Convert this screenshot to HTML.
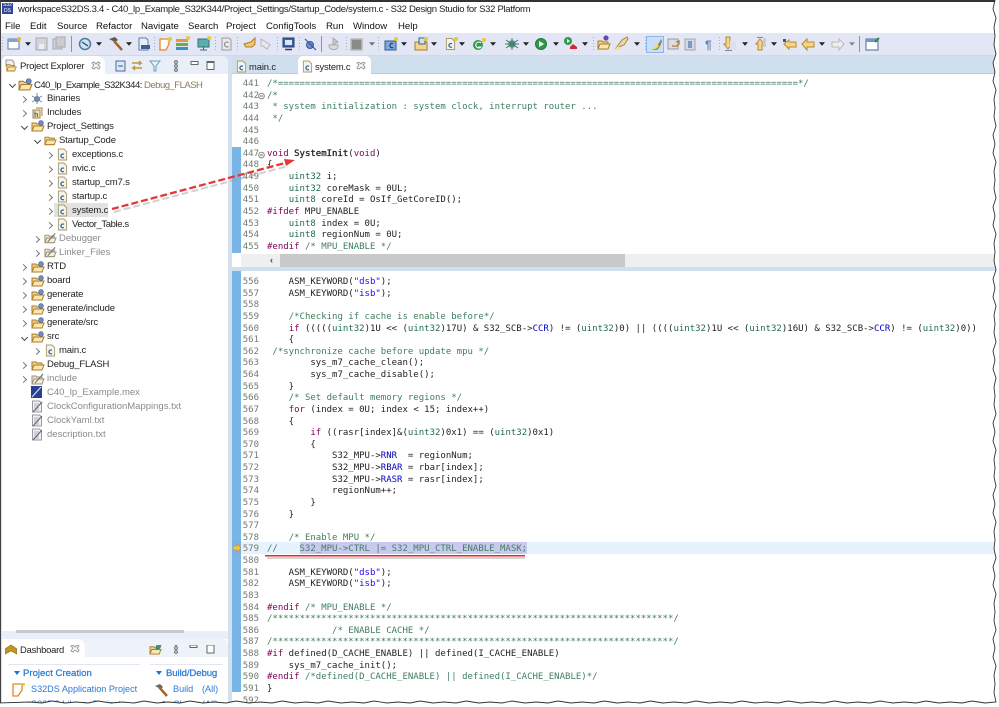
<!DOCTYPE html>
<html><head><meta charset="utf-8"><style>
html,body{margin:0;padding:0;background:#fff}
#r{position:relative;width:999px;height:707px;overflow:hidden;background:#fff;font-family:"Liberation Sans",sans-serif;font-size:10px;color:#222}
#r div,#r pre,#r svg{position:absolute}
.a{position:absolute;white-space:nowrap}
.m{top:21px;font-size:9.6px;color:#111}
pre{margin:0;font-family:"DejaVu Sans Mono",monospace;font-size:9px;line-height:11.63px;color:#222;filter:blur(.25px)}
.n{color:#6f7b70;text-align:right;left:236px;width:23px}
i{font-style:normal;color:#3f7f5f}b{font-weight:normal;color:#7f0055}
u{text-decoration:none;color:#1f6a55}s{text-decoration:none;color:#2a00ff}em{font-style:normal;color:#0000c0}
.t{left:0;white-space:nowrap;font-size:9.5px;letter-spacing:-.15px;color:#222;line-height:14px;height:14px;margin-top:1px}
.g{color:#8a8a8a;letter-spacing:0}
.ch{width:4px;height:4px;border-right:1px solid #777;border-bottom:1px solid #777;transform:rotate(-45deg);margin-top:1px}
.op{width:4px;height:4px;border-right:1px solid #444;border-bottom:1px solid #444;transform:rotate(45deg);margin-top:1px}
.l{font-size:9.1px;color:#2a7ad8}
</style></head><body><div id="r">
<svg width="0" height="0" style="position:absolute"><defs>
<symbol id="file" viewBox="0 0 12 13"><path d="M1.5.5h6l3 3v9h-9z" fill="#f6f3e8" stroke="#a89a70"/><path d="M7.5 6.4a2 2 0 1 0 0 3.2" fill="none" stroke="#2a62a8" stroke-width="1.3"/></symbol>
<symbol id="fold" viewBox="0 0 14 12"><path d="M1 3h4l1 1h5v7H1z" fill="#f3d489" stroke="#a97c2c"/><path d="M1 11l2-5h10l-2 5z" fill="#fbe6ad" stroke="#a97c2c"/><circle cx="10" cy="3" r="2.4" fill="#6f8dc0" stroke="#3f5f92" stroke-width=".6"/></symbol>
<symbol id="fold2" viewBox="0 0 14 12"><path d="M1 3h4l1 1h5v7H1z" fill="#f3d489" stroke="#a97c2c"/><path d="M1 11l2-5h10l-2 5z" fill="#fbe6ad" stroke="#a97c2c"/></symbol>
<symbol id="foldg" viewBox="0 0 14 12"><path d="M1 3h4l1 1h5v7H1z" fill="#efe4c8" stroke="#9a8f78"/><path d="M1 11l2-5h10l-2 5z" fill="#f6efd9" stroke="#9a8f78"/><path d="M4 10L12 1" stroke="#777" stroke-width="1.2"/></symbol>
<symbol id="txt" viewBox="0 0 12 13"><path d="M1.5 1h7l2 2v9h-9z" fill="#f0f0f0" stroke="#9a9aa5"/><path d="M3 4h5M3 6h5M3 8h5M3 10h5" stroke="#b5b5bd"/><path d="M2 12L11 2" stroke="#6a6a78" stroke-width="1.2"/></symbol>
<symbol id="dd" viewBox="0 0 7 4"><path d="M0 0h7L3.500 4z"/></symbol>
</defs></svg>

<!-- frame backgrounds -->
<div style="left:0;top:0;width:999px;height:2px;background:#333"></div>
<div style="left:0;top:0;width:1px;height:707px;background:#444"></div>
<div style="left:1px;top:33px;width:998px;height:23px;background:#e2e6f5;border-bottom:1px solid #d5d8e4;box-sizing:border-box"></div>
<div style="left:1px;top:56px;width:998px;height:650px;background:#d3e1ef"></div>

<!-- title -->
<div style="left:2px;top:3px;width:11px;height:11px;background:#2f4a9a;color:#fff;font-size:5px;line-height:5.5px;text-align:center">S32<br>DS</div>
<span class="a" style="left:18px;top:4px;font-size:9.5px;letter-spacing:-.3px;color:#222">workspaceS32DS.3.4 - C40_lp_Example_S32K344/Project_Settings/Startup_Code/system.c - S32 Design Studio for S32 Platform</span>
<span class="a m" style="left:5px">File</span><span class="a m" style="left:30px">Edit</span><span class="a m" style="left:57px">Source</span><span class="a m" style="left:96px">Refactor</span><span class="a m" style="left:141px">Navigate</span><span class="a m" style="left:188px">Search</span><span class="a m" style="left:226px">Project</span><span class="a m" style="left:266px">ConfigTools</span><span class="a m" style="left:326px">Run</span><span class="a m" style="left:353px">Window</span><span class="a m" style="left:398px">Help</span>

<!-- toolbar -->
<svg style="left:0;top:33px" width="999" height="23" viewBox="0 33 999 23">
<g fill="#222">
<use href="#dd" x="25" y="42" width="6" height="4"/><use href="#dd" x="96" y="42" width="6" height="4"/><use href="#dd" x="126" y="42" width="6" height="4"/><use href="#dd" x="369" y="42" width="6" height="4" fill="#777"/><use href="#dd" x="401" y="42" width="6" height="4"/><use href="#dd" x="431" y="42" width="6" height="4"/><use href="#dd" x="459" y="42" width="6" height="4"/><use href="#dd" x="490" y="42" width="6" height="4"/><use href="#dd" x="523" y="42" width="6" height="4"/><use href="#dd" x="553" y="42" width="6" height="4"/><use href="#dd" x="582" y="42" width="6" height="4"/><use href="#dd" x="634" y="42" width="6" height="4"/><use href="#dd" x="742" y="42" width="6" height="4"/><use href="#dd" x="771" y="42" width="6" height="4"/><use href="#dd" x="819" y="42" width="6" height="4"/><use href="#dd" x="849" y="42" width="6" height="4" fill="#888"/>
</g>
<g stroke="#a9acb8" stroke-dasharray="1 2"><path d="M2.500 37v14M154.500 37v14M215.500 37v14M237.500 37v14M277.500 37v14M299.500 37v14M346.500 37v14M378.500 37v14M593.500 37v14M645.500 37v14M719.500 37v14"/></g>
<path d="M71.500 36v16M321.500 36v16M859.500 36v16" stroke="#8f929c"/>
<!-- new window --><rect x="8" y="39" width="11" height="10" fill="#fff" stroke="#5a7aa5"/><rect x="8" y="39" width="11" height="3" fill="#7fa5d0"/><circle cx="19" cy="39" r="2" fill="#e8b93a"/>
<!-- save -->
<path d="M36 38h11v12H36z" fill="#d4d4d8" stroke="#a8a8ae"/><rect x="39" y="44" width="5" height="5" fill="#eee"/>
<path d="M53 39h9v10h-9z" fill="#d4d4d8" stroke="#a8a8ae"/><path d="M56 37h9v10h-9z" fill="#ccc" stroke="#a8a8ae"/>
<!-- gear --><circle cx="85" cy="44" r="5.500" fill="#cfe0f0" stroke="#4a7aa5" stroke-width="1.500"/><path d="M82 42l6 4" stroke="#345" stroke-width="1.200"/>
<!-- hammer --><path d="M109 39l6-2 3 3-3 2z" fill="#5a5a5a"/><path d="M114 41l8 9" stroke="#a5642a" stroke-width="2.500"/>
<!-- s32 --><path d="M139 38h7l2 2v10h-9z" fill="#e8eef6" stroke="#5f7ea5"/><rect x="141" y="45" width="9" height="4" fill="#3f5f92"/>
<!-- new orange --><path d="M160 39h9v5l-3 6h-6z" fill="#fff" stroke="#e8862a" stroke-width="1.300"/><circle cx="170" cy="39" r="2" fill="#e8c83a"/>
<!-- layers --><rect x="176" y="39" width="12" height="3" fill="#e8963a"/><rect x="176" y="43" width="12" height="3" fill="#6ab04a"/><rect x="176" y="47" width="12" height="3" fill="#3a8fd0"/><circle cx="188" cy="38" r="2" fill="#e8c83a"/>
<!-- monitor --><rect x="198" y="39" width="11" height="8" fill="#5ab0a8" stroke="#3a6a80"/><path d="M203.500 47v3M200 50h7" stroke="#3a6a80"/><circle cx="209" cy="38" r="2" fill="#e8c83a"/>
<!-- c gray --><path d="M222 38h7l2 2v10h-9z" fill="#e8e8ea" stroke="#9a9aa2"/><path d="M228.500 42.500a2.500 2.500 0 1 0 0 4" fill="none" stroke="#888" stroke-width="1.100"/>
<!-- undo arrows --><path d="M244 44l7-2 4-4v6l-3 3h-6z" fill="#f2c879" stroke="#b47c22"/><path d="M261 39l5 3 4 3-3 4-4-3h-2z" fill="#e8e8ea" stroke="#b5b5bb"/>
<!-- console --><rect x="283" y="38" width="11" height="9" fill="#3a62a8" stroke="#1f3f78"/><rect x="285" y="40" width="7" height="5" fill="#dce8f6"/><path d="M285 49.500h7" stroke="#1f3f78" stroke-width="1.500"/>
<!-- cross --><circle cx="310" cy="45" r="3.500" fill="#6a92c8" stroke="#2f5a98"/><path d="M305 39l11 11" stroke="#2f5a98" stroke-width="1.200"/>
<!-- run gray --><path d="M329 46c0 4 7 5 9 1v-2h-9z" fill="#ddd" stroke="#aaa"/><path d="M333 38l5 4-5 3z" fill="#c8c8c8" stroke="#aaa"/>
<!-- chip --><rect x="351" y="39" width="11" height="11" fill="#8a8a8a" stroke="#bbb" stroke-width="1.500"/>
<!-- c cube --><path d="M385 41h11v9h-11z" fill="#7fa8d8" stroke="#2f5a98"/><path d="M393 43.500a2.200 2.200 0 1 0 0 4" fill="none" stroke="#17396e" stroke-width="1.100"/><circle cx="396" cy="39" r="2" fill="#e8c83a"/>
<path d="M415 42h12v8h-12z" fill="#f3d489" stroke="#a97c2c"/><rect x="419" y="38" width="6" height="6" fill="#cfe0f0" stroke="#3f5f92"/><circle cx="426" cy="39" r="2" fill="#e8c83a"/>
<use href="#file" x="445" y="38" width="11" height="12"/><circle cx="456" cy="39" r="2" fill="#e8c83a"/>
<circle cx="478" cy="45" r="5" fill="#2e9a4a"/><path d="M481 43a3 3 0 1 0 0 4h-3" fill="none" stroke="#fff" stroke-width="1.100"/><circle cx="484" cy="40" r="2" fill="#e8c83a"/>
<!-- bug --><circle cx="512" cy="44" r="3.800" fill="#4a9a7a"/><path d="M506 40l12 8M506 48l12-8M505 44h14M512 38v12" stroke="#4a7a70"/>
<!-- play --><circle cx="541" cy="44" r="5.500" fill="#2e9a4a" stroke="#1e7a36"/><path d="M539 41l5 3-5 3z" fill="#fff"/>
<!-- ext --><circle cx="568" cy="41" r="4" fill="#2e9a4a"/><path d="M567 39l3 2-3 2z" fill="#fff"/><path d="M570 47l3-3 4 3v2h-7z" fill="#d02a2a"/>
<!-- folder --><use href="#fold2" x="597" y="38" width="14" height="12"/><circle cx="606" cy="38" r="2.600" fill="#6a4aa5"/>
<!-- brush --><path d="M616 48l6-8 5-3 1 2-4 6z" fill="#e8d8a8" stroke="#a98a3a"/><path d="M614 50l4-4 2 2-2 2z" fill="#f4e28a"/>
<!-- highlighted --><rect x="646.500" y="36.500" width="17" height="16" fill="#c8dff6" stroke="#88b8e8"/><path d="M650 50c3 0 7-2 11-11l1 2c-2 6-4 9-6 9z" fill="#8a7f6a"/><path d="M650 50c3-1 5-3 7-6l2 2c-2 3-5 4-9 4z" fill="#f2df4a"/>
<!-- ops --><rect x="668" y="39" width="10" height="10" fill="#dcdce4" stroke="#9a9aa8"/><path d="M672 46h5l2-2v-3l-3 1" fill="none" stroke="#b57c22" stroke-width="1.300"/>
<rect x="685" y="39" width="10" height="11" fill="#d4d8e4" stroke="#a4a8b5"/><rect x="688" y="41" width="4" height="7" fill="#7f9ac0"/>
<!-- down/up --><path d="M726 37h4v7h2l-4 5-4-5h2z" fill="#f5d58a" stroke="#b98a2a"/><rect x="730" y="41" width="6" height="9" fill="#dde0ea"/><rect x="725" y="50" width="7" height="1" fill="#6a8ab5"/>
<path d="M758 50h4v-6h2l-4-5-4 5h2z" fill="#f5d58a" stroke="#b98a2a"/><rect x="763" y="38" width="3" height="9" fill="#c8ccd8"/><rect x="757" y="37" width="6" height="1" fill="#6a8ab5"/>
<path d="M784 44l5-4v2h7v5h-7v2z" fill="#f5d58a" stroke="#b98a2a"/><rect x="783" y="39" width="3" height="3" fill="#345a90"/>
<path d="M802 44l5-5v3h7v5h-7v3z" fill="#f5d58a" stroke="#b98a2a"/>
<path d="M844 44l-5-5v3h-7v5h7v3z" fill="#eee" stroke="#bbb"/>
<!-- maximise --><rect x="866" y="39" width="12" height="11" fill="#fff" stroke="#4a6a90"/><rect x="866" y="39" width="12" height="3" fill="#6f9ac8"/><path d="M875 42l4-4" stroke="#2e8a3a" stroke-width="2"/>
</svg>
<span class="a" style="left:705px;top:38px;font-size:12px;font-weight:bold;color:#5f82b5">¶</span>

<!-- left panel -->
<div style="left:2px;top:74px;width:226px;height:557px;background:#fff"></div>
<div style="left:2px;top:56px;width:226px;height:18px;background:#e8eff8;border-radius:5px 5px 0 0"></div>
<div style="left:2px;top:56px;width:103px;height:18px;background:#fff;border-radius:5px 8px 0 0"></div>
<svg style="left:5px;top:59px" width="13" height="13"><path d="M1 1h6l2 2v4H1z" fill="#eee" stroke="#999"/><use href="#fold2" x="1" y="3" width="11" height="10"/></svg>
<span class="a" style="left:20px;top:61px;font-size:9.6px;letter-spacing:-.25px;color:#222">Project Explorer</span>
<svg style="left:88px;top:60px" width="135" height="14" fill="none"><path d="M4 3l2-1 2 2 2-2 2 1-2 2 2 2-1 2-3-2-2 2-2-1 2-3z" stroke="#9a9a9a"/>
<rect x="28" y="1" width="9" height="10" stroke="#4a6a9a" fill="#dde8f5"/><path d="M30 6h5" stroke="#345a90"/>
<path d="M44 3h9l-2-2M53 3l-2 2M54 8h-9l2 2M45 8l2-2" stroke="#c49632" stroke-width="1.400"/>
<path d="M62 1h10l-4 5v5h-2V6z" stroke="#6f9ac0" fill="#e8f0f8"/>
<circle cx="88" cy="2" r="1.400" stroke="#666"/><circle cx="88" cy="6" r="1.400" stroke="#666"/><circle cx="88" cy="10" r="1.400" stroke="#666"/>
<rect x="103" y="1.500" width="7" height="3" stroke="#666" fill="#fff"/><rect x="119" y="1.500" width="7" height="8" stroke="#666" fill="#fff"/><path d="M119 2.500h7" stroke="#666"/></svg>

<!-- tree -->
<div class="op" style="left:10px;top:81px"></div>
<svg style="left:18px;top:78px" width="15" height="13"><use href="#fold" width="15" height="13"/></svg>
<span class="a t" style="left:34px;top:78px;letter-spacing:-.5px"><span style="color:#222">C40_lp_Example_S32K344:</span> <span style="color:#8a7c55">Debug_FLASH</span></span>

<div class="ch" style="left:21px;top:96px"></div><svg style="left:31px;top:92px" width="13" height="13"><circle cx="6" cy="7" r="3" fill="#5a7fa8"/><path d="M1 4l10 6M1 10l10-6M6 1v11" stroke="#7a8fa5"/></svg><span class="a t" style="left:47px;top:91px">Binaries</span>
<div class="ch" style="left:21px;top:110px"></div><svg style="left:31px;top:106px" width="13" height="13"><path d="M2 4h7v8H2z" fill="#f5e3b0" stroke="#a08040"/><path d="M5 2h6v8" fill="none" stroke="#a08040"/><text x="3" y="11" font-size="7" font-weight="bold" fill="#345a90" font-family="Liberation Sans">h</text></svg><span class="a t" style="left:47px;top:105px">Includes</span>
<div class="op" style="left:22px;top:123px"></div><svg style="left:31px;top:120px" width="14" height="12"><use href="#fold" width="14" height="12"/></svg><span class="a t" style="left:47px;top:119px">Project_Settings</span>
<div class="op" style="left:35px;top:137px"></div><svg style="left:44px;top:134px" width="13" height="12"><use href="#fold2" width="13" height="12"/></svg><span class="a t" style="left:59px;top:133px">Startup_Code</span>

<div style="left:54px;top:203px;width:54px;height:14px;background:#e2e2e2"></div>
<div class="ch" style="left:47px;top:152px"></div><svg style="left:57px;top:148px" width="11" height="13"><use href="#file" width="11" height="13"/></svg><span class="a t" style="left:72px;top:147px">exceptions.c</span>
<div class="ch" style="left:47px;top:166px"></div><svg style="left:57px;top:162px" width="11" height="13"><use href="#file" width="11" height="13"/></svg><span class="a t" style="left:72px;top:161px">nvic.c</span>
<div class="ch" style="left:47px;top:180px"></div><svg style="left:57px;top:176px" width="11" height="13"><use href="#file" width="11" height="13"/></svg><span class="a t" style="left:72px;top:175px">startup_cm7.s</span>
<div class="ch" style="left:47px;top:194px"></div><svg style="left:57px;top:190px" width="11" height="13"><use href="#file" width="11" height="13"/></svg><span class="a t" style="left:72px;top:189px">startup.c</span>
<div class="ch" style="left:47px;top:208px"></div><svg style="left:57px;top:204px" width="11" height="13"><use href="#file" width="11" height="13"/></svg><span class="a t" style="left:72px;top:203px">system.c</span>
<div class="ch" style="left:47px;top:222px"></div><svg style="left:57px;top:218px" width="11" height="13"><use href="#file" width="11" height="13"/></svg><span class="a t" style="left:72px;top:217px;letter-spacing:-.4px">Vector_Table.s</span>
<div class="ch" style="left:34px;top:236px"></div><svg style="left:44px;top:232px" width="13" height="12"><use href="#foldg" width="13" height="12"/></svg><span class="a t g" style="left:59px;top:231px">Debugger</span>
<div class="ch" style="left:34px;top:250px"></div><svg style="left:44px;top:246px" width="13" height="12"><use href="#foldg" width="13" height="12"/></svg><span class="a t g" style="left:59px;top:245px">Linker_Files</span>

<div class="ch" style="left:21px;top:264px"></div><svg style="left:31px;top:261px" width="14" height="12"><use href="#fold" width="14" height="12"/></svg><span class="a t" style="left:47px;top:259px">RTD</span>
<div class="ch" style="left:21px;top:278px"></div><svg style="left:31px;top:275px" width="14" height="12"><use href="#fold" width="14" height="12"/></svg><span class="a t" style="left:47px;top:273px">board</span>
<div class="ch" style="left:21px;top:292px"></div><svg style="left:31px;top:289px" width="14" height="12"><use href="#fold" width="14" height="12"/></svg><span class="a t" style="left:47px;top:287px">generate</span>
<div class="ch" style="left:21px;top:306px"></div><svg style="left:31px;top:303px" width="14" height="12"><use href="#fold" width="14" height="12"/></svg><span class="a t" style="left:47px;top:301px">generate/include</span>
<div class="ch" style="left:21px;top:320px"></div><svg style="left:31px;top:317px" width="14" height="12"><use href="#fold" width="14" height="12"/></svg><span class="a t" style="left:47px;top:315px">generate/src</span>
<div class="op" style="left:22px;top:334px"></div><svg style="left:31px;top:331px" width="14" height="12"><use href="#fold" width="14" height="12"/></svg><span class="a t" style="left:47px;top:329px">src</span>
<div class="ch" style="left:34px;top:348px"></div><svg style="left:45px;top:344px" width="11" height="13"><use href="#file" width="11" height="13"/></svg><span class="a t" style="left:59px;top:343px">main.c</span>
<div class="ch" style="left:21px;top:362px"></div><svg style="left:31px;top:359px" width="14" height="12"><use href="#fold2" width="14" height="12"/></svg><span class="a t" style="left:47px;top:357px">Debug_FLASH</span>
<div class="ch" style="left:21px;top:376px"></div><svg style="left:31px;top:373px" width="14" height="12"><use href="#foldg" width="14" height="12"/></svg><span class="a t g" style="left:47px;top:371px">include</span>
<svg style="left:31px;top:386px" width="12" height="13"><rect x="0" y="0" width="11" height="12" fill="#2a3f92"/><path d="M1 11L10 1" stroke="#cfe0f0" stroke-width="1.200"/></svg><span class="a t g" style="left:47px;top:385px">C40_lp_Example.mex</span>
<svg style="left:31px;top:400px" width="12" height="13"><use href="#txt" width="12" height="13"/></svg><span class="a t g" style="left:47px;top:399px">ClockConfigurationMappings.txt</span>
<svg style="left:31px;top:414px" width="12" height="13"><use href="#txt" width="12" height="13"/></svg><span class="a t g" style="left:47px;top:413px">ClockYaml.txt</span>
<svg style="left:31px;top:428px" width="12" height="13"><use href="#txt" width="12" height="13"/></svg><span class="a t g" style="left:47px;top:427px">description.txt</span>

<!-- left scrollbar stub -->
<div style="left:2px;top:631px;width:226px;height:8px;background:#e8eff8"></div>
<div style="left:16px;top:630px;width:168px;height:3px;background:#c9c9c9"></div>

<!-- dashboard -->
<div style="left:2px;top:639px;width:226px;height:68px;background:#fff"></div>
<div style="left:2px;top:639px;width:226px;height:18px;background:#eef3fa;border-radius:5px 5px 0 0"></div>
<div style="left:2px;top:639px;width:83px;height:18px;background:#fff;border-radius:5px 8px 0 0"></div>
<svg style="left:5px;top:644px" width="12" height="11"><path d="M0 10V5l6-4 6 4v5l-6-3z" fill="#c2971f" stroke="#8a6a10" stroke-width=".6"/></svg>
<span class="a" style="left:20px;top:644px;font-size:9.4px;letter-spacing:-.2px;color:#222">Dashboard</span>
<svg style="left:70px;top:645px" width="150" height="14" fill="none"><path d="M1 1l2-1 2 2 2-2 2 1-2 2 2 2-1 2-3-2-2 2-2-1 2-3z" stroke="#9a9a9a"/><use href="#fold" x="79" y="-1" width="13" height="11"/><path d="M86 4l5-4" stroke="#2e9a4a" stroke-width="2"/>
<circle cx="106" cy="-1" r="1.400" stroke="#666"/><circle cx="106" cy="3" r="1.400" stroke="#666"/><circle cx="106" cy="7" r="1.400" stroke="#666"/>
<rect x="120" y="0" width="7" height="2.500" stroke="#666" fill="#fff"/><rect x="137" y="0" width="7" height="8" stroke="#666" fill="#fff"/></svg>
<div style="left:8px;top:664px;width:132px;height:1px;background:#e3e8f0"></div><div style="left:150px;top:664px;width:73px;height:1px;background:#e3e8f0"></div>
<svg style="left:14px;top:671px" width="160" height="5" fill="#1a73d8"><path d="M0 0h6L3 4z"/><path d="M142 0h6l-3 4z"/></svg>
<span class="a" style="left:23px;top:668px;font-size:9.6px;color:#2a7ad8;-webkit-text-stroke:.25px #2a7ad8">Project Creation</span>
<span class="a" style="left:166px;top:668px;font-size:9.6px;letter-spacing:-.1px;color:#2a7ad8;-webkit-text-stroke:.25px #2a7ad8">Build/Debug</span>
<svg style="left:12px;top:683px" width="14" height="24" fill="none"><path d="M1 1h9v6l-4 6H1z" fill="#fff" stroke="#e8862a" stroke-width="1.300"/><circle cx="11" cy="1" r="2" fill="#e8c83a"/><path d="M0 20h12M0 23h12" stroke="#8ab04a" stroke-width="2"/></svg>
<span class="a l" style="left:31px;top:684px">S32DS Application Project</span>
<span class="a l" style="left:31px;top:699px">S32DS Library Project</span>
<svg style="left:154px;top:684px" width="16" height="23" fill="none"><path d="M1 2l5-2 3 3-2 2z" fill="#666"/><path d="M5 3l8 9" stroke="#a5642a" stroke-width="2.500"/><path d="M4 21l6-3 3 3" stroke="#a5642a" stroke-width="2"/></svg>
<span class="a l" style="left:173px;top:684px">Build</span><span class="a l" style="left:202px;top:684px">(All)</span>
<span class="a l" style="left:173px;top:699px">Clean</span><span class="a l" style="left:202px;top:699px">(All)</span>

<!-- editor tabs -->
<div style="left:232px;top:56px;width:767px;height:18px;background:#cfdfee;border-bottom:1px solid #b9cee2;box-sizing:border-box"></div>
<div style="left:298px;top:56px;width:73px;height:18px;background:#fff;border-radius:5px 5px 0 0"></div>
<svg style="left:236px;top:60px" width="11" height="13"><use href="#file" width="11" height="13"/></svg><span class="a" style="left:249px;top:61px;font-size:9.4px;letter-spacing:-.1px;color:#222">main.c</span>
<svg style="left:302px;top:60px" width="11" height="13"><use href="#file" width="11" height="13"/></svg><span class="a" style="left:315px;top:61px;font-size:9.4px;letter-spacing:-.2px;color:#222">system.c</span>
<svg style="left:356px;top:62px" width="11" height="10" fill="none"><path d="M1 1l2-1 2 2 2-2 2 1-2 2 2 2-1 2-3-2-2 2-2-1 2-3z" stroke="#9a9a9a"/></svg>

<!-- editors -->
<div style="left:232px;top:74px;width:767px;height:194px;background:#fff"></div>
<div style="left:232px;top:271px;width:767px;height:436px;background:#fff"></div>
<div style="left:232px;top:147px;width:9px;height:106px;background:#79b4e6"></div>
<div style="left:232px;top:271px;width:9px;height:421px;background:#79b4e6"></div>
<div style="left:241px;top:254px;width:758px;height:13px;background:#efefef"></div>
<div style="left:280px;top:254px;width:345px;height:13px;background:#c9c9c9"></div>
<span class="a" style="left:270px;top:255px;font-size:9px;font-weight:bold;color:#444">‹</span>
<div style="left:232px;top:267px;width:767px;height:4px;background:#cfdfee"></div>

<div style="left:241px;top:542px;width:758px;height:12px;background:#e8f2fe"></div>
<div style="left:300px;top:542px;width:227px;height:12px;background:#c9c9ef"></div>

<pre class="n" style="top:79px">441
442
443
444
445
446
447
448
449
450
451
452
453
454
455</pre>
<svg style="left:258px;top:92px" width="9" height="76" fill="none"><circle cx="3.500" cy="4" r="2.800" stroke="#888"/><path d="M2 4h3" stroke="#666"/><circle cx="3.500" cy="63" r="2.800" stroke="#888"/><path d="M2 63h3" stroke="#666"/></svg>
<pre style="left:267px;top:79px"><i>/*================================================================================================*/</i>
<i>/*</i>
<i> * system initialization : system clock, interrupt router ...</i>
<i> */</i>


<b>void</b> <span style="-webkit-text-stroke:.3px #222">SystemInit</span>(<b>void</b>)
{
    <u>uint32</u> i;
    <u>uint32</u> coreMask = 0UL;
    <u>uint8</u> coreId = OsIf_GetCoreID();
<b>#ifdef</b> MPU_ENABLE
    <u>uint8</u> index = 0U;
    <u>uint8</u> regionNum = 0U;
<b>#endif</b> <i>/* MPU_ENABLE */</i></pre>

<pre class="n" style="top:277px">556
557
558
559
560
561
562
563
564
565
566
567
568
569
570
571
572
573
574
575
576
577
578
579
580
581
582
583
584
585
586
587
588
589
590
591
592</pre>
<pre style="left:267px;top:277px">    ASM_KEYWORD(<s>"dsb"</s>);
    ASM_KEYWORD(<s>"isb"</s>);

    <i>/*Checking if cache is enable before*/</i>
    <b>if</b> (((((<u>uint32</u>)1U &lt;&lt; (<u>uint32</u>)17U) &amp; S32_SCB-&gt;<em>CCR</em>) != (<u>uint32</u>)0) || ((((<u>uint32</u>)1U &lt;&lt; (<u>uint32</u>)16U) &amp; S32_SCB-&gt;<em>CCR</em>) != (<u>uint32</u>)0))
    {
 <i>/*synchronize cache before update mpu */</i>
        sys_m7_cache_clean();
        sys_m7_cache_disable();
    }
    <i>/* Set default memory regions */</i>
    <b>for</b> (index = 0U; index &lt; 15; index++)
    {
        <b>if</b> ((rasr[index]&amp;(<u>uint32</u>)0x1) == (<u>uint32</u>)0x1)
        {
            S32_MPU-&gt;<em>RNR</em>  = regionNum;
            S32_MPU-&gt;<em>RBAR</em> = rbar[index];
            S32_MPU-&gt;<em>RASR</em> = rasr[index];
            regionNum++;
        }
    }

    <i>/* Enable MPU */</i>
<i>//    S32_MPU-&gt;CTRL |= S32_MPU_CTRL_ENABLE_MASK;</i>

    ASM_KEYWORD(<s>"dsb"</s>);
    ASM_KEYWORD(<s>"isb"</s>);

<b>#endif</b> <i>/* MPU_ENABLE */</i>
<i>/**************************************************************************/</i>
            <i>/* ENABLE CACHE */</i>
<i>/**************************************************************************/</i>
<b>#if</b> defined(D_CACHE_ENABLE) || defined(I_CACHE_ENABLE)
    sys_m7_cache_init();
<b>#endif</b> <i>/*defined(D_CACHE_ENABLE) || defined(I_CACHE_ENABLE)*/</i>
}</pre>

<svg style="left:233px;top:543px" width="9" height="10"><path d="M0 3h4V0l4 5-4 5V7H0z" fill="#f2c24a" stroke="#b98a2a" stroke-width=".6"/></svg>

<!-- annotations -->
<svg style="left:0;top:0" width="999" height="707" fill="none">
<path d="M114 212L288 166" stroke="#999" stroke-width="2" stroke-dasharray="7 3" opacity=".45"/>
<path d="M112 209L285 163" stroke="#e5383b" stroke-width="2.300" stroke-dasharray="7 3"/>
<path d="M295 160l-11-1 2 7z" fill="#e5383b"/>
<rect x="267" y="557" width="258" height="2" fill="#aaa" opacity=".5"/>
<rect x="265" y="555" width="260" height="1.500" fill="#e02a2a"/>
<path fill="#fff" stroke="#333" stroke-width=".9" d="M995 0
l-2 9 3 9-2 9 1 9 -1 9 2 9-3 9 2 9 -2 9 3 9-2 9 1 9 -1 9 2 9-3 9 2 9 -2 9 3 9-2 9 1 9
-1 9 2 9-3 9 2 9 -2 9 3 9-2 9 1 9 -1 9 2 9-3 9 2 9 -2 9 3 9-2 9 1 9 -1 9 2 9-3 9 2 9
-2 9 3 9-2 9 1 9 -1 9 2 9-3 9 2 9 -2 9 3 9-2 9 1 9 -1 9 2 9-3 9 2 9 -2 9 3 9-2 9 1 9
-1 9 2 9-3 9 2 9 -2 9 3 9-2 9 1 9 -1 9 2 9-3 9 2 9 -2 9 3 9-2 9 1 9 -1 9 2 9
l-11 1-13-2-10 2-12-1-11 1-13-2-10 2-12-1-11 1-13-2-10 2-12-1-11 1-13-2-10 2-12-1-11 1-13-2-10 2-12-1
-11 1-13-2-10 2-12-1-11 1-13-2-10 2-12-1-11 1-13-2-10 2-12-1-11 1-13-2-10 2-12-1-11 1-13-2-10 2-12-1
-11 1-13-2-10 2-12-1-11 1-13-2-10 2-12-1-11 1-13-2-10 2-12-1-11 1-13-2-10 2-12-1-11 1-13-2-10 2-12-1
-11 1-13-2-10 2-12-1-11 1-13-2-10 2-12-1-11 1-13-2-10 2-12-1-11 1-13-2-10 2-12-1-11 1-13-2-10 2-12-1
-11 1-13-2-10 2-12-1
L-2 703 L-2 709 L1001 709 L1001 -2 L995 -2 Z"/>
</svg>
</div></body></html>
